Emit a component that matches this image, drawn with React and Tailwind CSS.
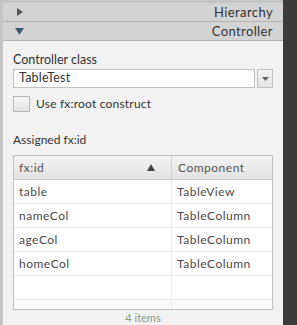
const rows = [
  ["table", "TableView"],
  ["nameCol", "TableColumn"],
  ["ageCol", "TableColumn"],
  ["homeCol", "TableColumn"],
  ["", ""],
];

const Header = ({ title, open }) => (
  <div className="flex h-[19px] shrink-0 items-center justify-between border-b border-[#b4b4b4] bg-[#d3d3d3] pl-[12px] pr-[10px]">
    {open ? (
      <svg width="9" height="7" viewBox="0 0 9 7">
        <path d="M0 0 L9 0 L4.5 6.5 Z" fill="#3c5868" />
      </svg>
    ) : (
      <svg width="7" height="8" viewBox="0 0 7 8" className="ml-[2px]">
        <path d="M0 0 L6 4 L0 8 Z" fill="#555" />
      </svg>
    )}
    <span className="text-[13px] leading-none tracking-[0.4px] text-[#333]">{title}</span>
  </div>
);

export default function App() {
  return (
    <div className="flex h-[325px] w-[297px] overflow-hidden bg-[#c4c4c4] font-['Lato','Noto_Sans',sans-serif] text-[#333]">
      <div className="ml-[3px] mt-[3px] flex w-[280px] shrink-0 flex-col bg-[#f2f2f2]">
        <Header title="Hierarchy" />
        <Header title="Controller" open />
        <div className="flex shrink-0 flex-col px-[10px] pt-[11px]">
          <div className="text-[12.5px] leading-[15px]">Controller class</div>
          <div className="mt-[2px] flex h-[19px] gap-[2px]">
            <div className="flex flex-1 items-center border border-[#c2c2c2] bg-white pl-[5px] text-[12.5px] tracking-[0.2px]">
              TableTest
            </div>
            <div className="flex w-[16px] items-center justify-center border border-[#c2c2c2] bg-gradient-to-b from-[#f4f4f4] to-[#e2e2e2]">
              <svg width="7" height="4" viewBox="0 0 7 4">
                <path d="M0 0 L7 0 L3.5 4 Z" fill="#666" />
              </svg>
            </div>
          </div>
          <div className="mt-[7px] flex items-center gap-[6px]">
            <div className="h-[16px] w-[17px] border border-[#b8b8b8] bg-gradient-to-b from-[#f6f6f6] to-[#e4e4e4]" />
            <span className="text-[12px] tracking-[0.2px]">Use fx:root construct</span>
          </div>
          <div className="mt-[20px] text-[12px] leading-[14px]">Assigned fx:id</div>
          <div className="mt-[8px] flex flex-col border border-[#c0c0c0] bg-white">
            <div className="flex h-[24px] border-b border-[#c8c8c8] bg-gradient-to-b from-[#f3f3f3] to-[#e3e3e3] text-[12px] tracking-[0.5px] text-[#555]">
              <div className="flex w-[158px] items-center justify-between border-r border-[#cfcfcf] pl-[5px] pr-[16px]">
                <span>fx:id</span>
                <svg width="8" height="7" viewBox="0 0 8 7">
                  <path d="M0 7 L8 7 L4 0 Z" fill="#444" />
                </svg>
              </div>
              <div className="flex flex-1 items-center pl-[6px]">Component</div>
            </div>
            {rows.map(([id, comp], i) => (
              <div key={i} className="flex h-[24px] border-b border-[#ededed] text-[12px] tracking-[0.5px] text-[#4a4a4a]">
                <div className="flex w-[158px] items-center border-r border-[#ececec] pl-[5px]">{id}</div>
                <div className="flex flex-1 items-center pl-[5px]">{comp}</div>
              </div>
            ))}
            <div className="flex h-[9px] bg-[#fafafa]">
              <div className="w-[158px] border-r border-[#ececec]" />
            </div>
          </div>
          <div className="mt-[2px] text-center text-[11px] leading-[12px] text-[#8c9a84]">4 items</div>
        </div>
      </div>
      <div className="ml-auto w-[14px] bg-[#3b3b3b]" />
    </div>
  );
}
